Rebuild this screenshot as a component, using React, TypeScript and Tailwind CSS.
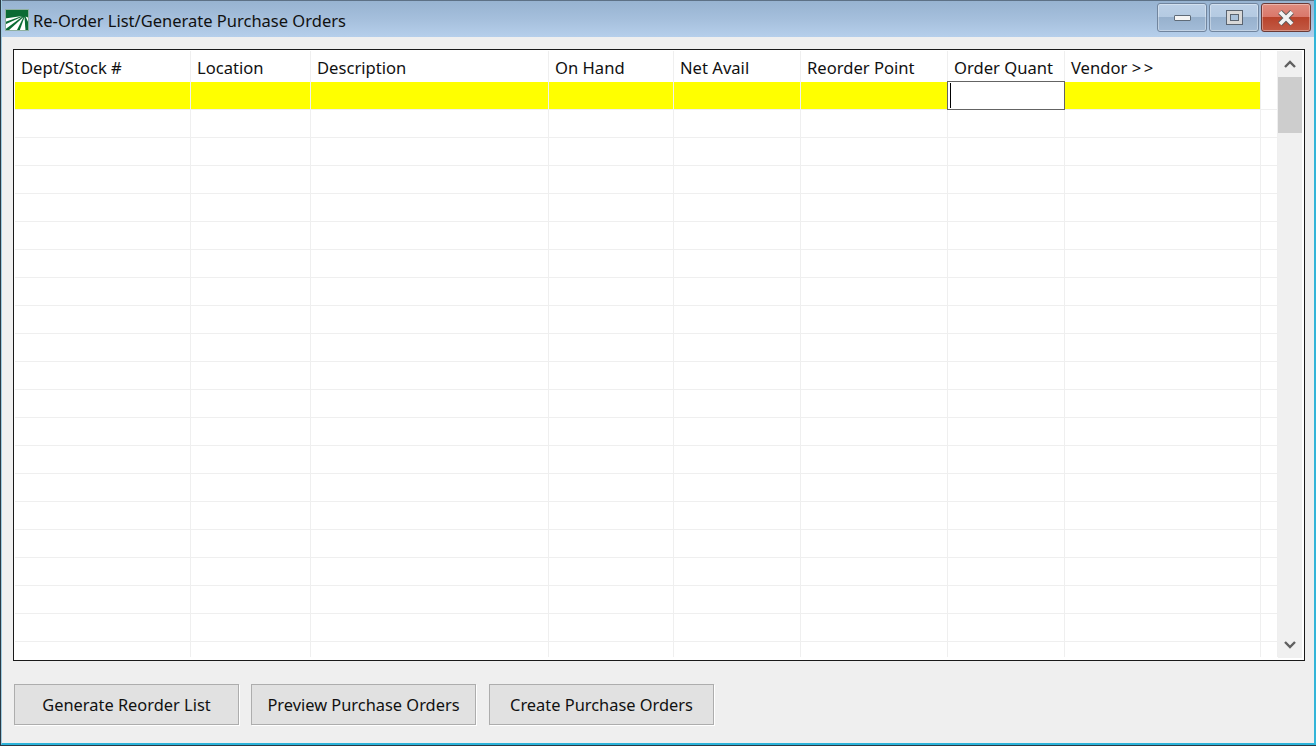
import React from 'react';

const columns = [
  { label: 'Dept/Stock #', width: 'w-[176px]' },
  { label: 'Location', width: 'w-[120px]' },
  { label: 'Description', width: 'w-[238px]' },
  { label: 'On Hand', width: 'w-[125px]' },
  { label: 'Net Avail', width: 'w-[127px]' },
  { label: 'Reorder Point', width: 'w-[147px]' },
  { label: 'Order Quant', width: 'w-[117px]' },
  { label: 'Vendor', width: 'w-[196px]' },
  { label: '', width: 'w-[17px]' },
];

const emptyRows = [...Array(20)];

function AppIcon() {
  return (
    <svg width="24" height="22" viewBox="0 0 24 22" className="shrink-0">
      <rect x="0" y="0" width="24" height="22" fill="#0b6b34" />
      <path d="M17 7 L0 9.5 V13 Z" fill="#ffffff" />
      <path d="M17.5 7.5 L0 15.5 V20.5 Z" fill="#ffffff" />
      <path d="M18.5 8 L3 22 H11.5 Z" fill="#ffffff" />
      <path d="M19.5 8 L14.5 22 H20.5 Z" fill="#ffffff" />
      <path d="M20.5 7.5 L24 15 V9 Z" fill="#ffffff" />
      <rect x="0.5" y="0.5" width="23" height="21" fill="none" stroke="#8fb0a0" strokeWidth="1" />
    </svg>
  );
}

function CaptionButton({ kind }: { kind: 'min' | 'max' | 'close' }) {
  if (kind === 'close') {
    return (
      <div className="relative w-[50px] h-[29px] rounded-[3px] border border-[#6b3a36] flex items-center justify-center bg-[linear-gradient(to_bottom,#e08d80_0%,#d9776a_48%,#b9432c_50%,#c25a44_100%)] shadow-[inset_0_0_0_1px_rgba(255,255,255,0.35)]">
        <svg width="18" height="16" viewBox="0 0 18 16">
          <path d="M3 2 L15 14 M15 2 L3 14" stroke="#5a5a5a" strokeWidth="5.4" />
          <path d="M3 2 L15 14 M15 2 L3 14" stroke="#f2f2f2" strokeWidth="3.8" />
        </svg>
      </div>
    );
  }
  return (
    <div className="w-[50px] h-[29px] rounded-[3px] border border-[#71859e] flex items-center justify-center bg-[linear-gradient(to_bottom,#bcd0e6_0%,#b4cae2_48%,#97b1cd_50%,#a3bcd8_100%)] shadow-[inset_0_0_0_1px_rgba(255,255,255,0.35)]">
      {kind === 'min' ? (
        <div className="w-[17px] h-[6px] mt-[1px] bg-[#f4f4f4] border border-[#5f6b78] rounded-[1px]" />
      ) : (
        <div className="w-[17px] h-[15px] bg-[#d8d8d8] border border-[#5a6470] flex items-center justify-center">
          <div className="w-[9px] h-[7px] bg-[#a9c1da] border border-[#5a6470]" />
        </div>
      )}
    </div>
  );
}

function ActionButton({ label }: { label: string }) {
  return (
    <button className="w-[225px] h-[41px] pt-[2px] bg-[#e1e1e1] border border-[#adadad] text-[16.4px] text-[#111] shadow-[1px_1px_0_#ffffff]">
      {label}
    </button>
  );
}

export default function App() {
  return (
    <div className="w-[1316px] h-[746px] border-l border-b border-[#2a3a45]">
      <div className="h-full flex flex-col overflow-hidden bg-[#efefef] border-l border-r-2 border-b-2 border-l-[#9ecbe0] border-r-[#33b5d8] border-b-[#2bb3da] font-['Noto_Sans',sans-serif] text-[#111]">
        {/* Title bar */}
        <div className="h-[37px] shrink-0 -ml-[1px] -mr-[2px] flex items-center pl-[4px] pr-[5px] pt-[1px] border-t border-[#5d7186] bg-[linear-gradient(to_bottom,#97b3d1_0%,#a5bfdc_50%,#b6cfeb_100%)]">
          <AppIcon />
          <span className="ml-[4px] mt-[3px] text-[16.5px] leading-none text-[#111]">Re-Order List/Generate Purchase Orders</span>
          <div className="ml-auto flex gap-[2px] -mt-[4px]">
            <CaptionButton kind="min" />
            <CaptionButton kind="max" />
            <CaptionButton kind="close" />
          </div>
        </div>

        {/* Grid */}
        <div className="mt-[12px] ml-[11px] w-[1292px] h-[612px] shrink-0 border border-[#1a1a1a] bg-white flex overflow-hidden p-[1px]">
          <div className="w-[1263px] shrink-0 flex flex-col overflow-hidden mb-[2px]">
            <div className="flex h-[31px] shrink-0">
              {columns.map((col, i) => (
                <div key={i} className={`${col.width} shrink-0 border-r border-[#efefef] pl-[6px] pt-[5px] text-[16.6px] leading-[24px] whitespace-nowrap`}>
                  {col.label}
                  {col.label === 'Vendor' && (
                    <>
                      {' '}
                      <span className="tracking-[2.5px]">&gt;&gt;</span>
                    </>
                  )}
                </div>
              ))}
            </div>
            <div className="flex h-[28px] shrink-0 border-b border-[#efefef]">
              {columns.map((col, i) => (
                <div key={i} className={`${col.width} shrink-0 border-r border-[#efefef] ${i === 8 ? 'bg-white' : 'bg-[#ffff00]'} ${i === 6 ? 'relative' : ''}`}>
                  {i === 6 && (
                    <div className="absolute -top-[1px] -left-[1px] h-[29px] w-[118px] bg-white border border-[#646464] flex items-center pl-[2px]">
                      <div className="w-[1px] h-[25px] bg-black" />
                    </div>
                  )}
                </div>
              ))}
            </div>
            {emptyRows.map((_, r) => (
              <div key={r} className="flex h-[28px] shrink-0 border-b border-[#efefef]">
                {columns.map((col, i) => (
                  <div key={i} className={`${col.width} shrink-0 border-r border-[#efefef]`} />
                ))}
              </div>
            ))}
          </div>

          {/* Scrollbar */}
          <div className="w-[24px] shrink-0 bg-[#f0f0f0] flex flex-col mb-[1px]">
            <div className="h-[26px] flex items-center justify-center">
              <svg width="12" height="8" viewBox="0 0 12 8">
                <path d="M1 7 L6 2 L11 7" fill="none" stroke="#606060" strokeWidth="2.4" />
              </svg>
            </div>
            <div className="h-[56px] bg-[#cdcdcd]" />
            <div className="flex-1" />
            <div className="h-[26px] flex items-center justify-center">
              <svg width="12" height="8" viewBox="0 0 12 8">
                <path d="M1 1 L6 6 L11 1" fill="none" stroke="#606060" strokeWidth="2.4" />
              </svg>
            </div>
          </div>
        </div>

        {/* Buttons */}
        <div className="mt-[23px] ml-[12px] flex gap-[12px]">
          <ActionButton label="Generate Reorder List" />
          <ActionButton label="Preview Purchase Orders" />
          <div className="ml-[1px]">
            <ActionButton label="Create Purchase Orders" />
          </div>
        </div>
      </div>
    </div>
  );
}
